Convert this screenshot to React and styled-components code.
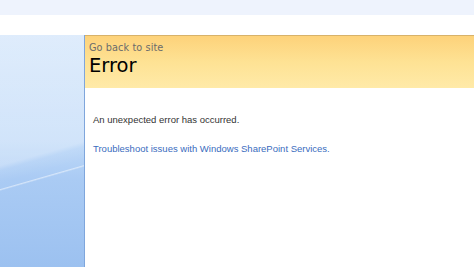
import styled, { createGlobalStyle } from 'styled-components';

const GlobalStyle = createGlobalStyle`
  html, body {
    margin: 0;
    padding: 0;
    background: #ffffff;
  }
  #root {
    min-height: 100vh;
    display: flex;
    flex-direction: column;
  }
`;

const App = () => {
  return (
    <>
      <GlobalStyle />
      <Page>
        <TopBar />
        <Gap />
        <Main>
          <Sidebar />
          <Content>
            <TitleArea>
              <BackLink href='#'>Go back to site</BackLink>
              <Title>Error</Title>
            </TitleArea>
            <Body>
              <Message>An unexpected error has occurred.</Message>
              <HelpLink href='#'>
                Troubleshoot issues with Windows SharePoint Services.
              </HelpLink>
            </Body>
          </Content>
        </Main>
      </Page>
    </>
  );
};

export default App;

const Page = styled.div`
  flex: 1;
  display: flex;
  flex-direction: column;
`;

const TopBar = styled.div`
  height: 15px;
  background: #eef3fd;
`;

const Gap = styled.div`
  height: 20px;
  background: #ffffff;
`;

const Main = styled.div`
  flex: 1;
  display: flex;
`;

// light swoosh across the blue quick launch column
const Sidebar = styled.div`
  width: 84px;
  flex-shrink: 0;
  border-right: 1px solid #7fa6dc;
  background:
    linear-gradient(164deg, transparent 0 60%, rgba(255, 255, 255, 0.5) 60.4%, transparent 61%),
    linear-gradient(164deg, rgba(255, 255, 255, 0.28) 0 51%, rgba(255, 255, 255, 0.08) 53%, transparent 58%),
    linear-gradient(180deg, #d2e5fb 0%, #c0daf8 45%, #aacbf4 62%, #9cc1f0 100%);
`;

const Content = styled.div`
  flex: 1;
  display: flex;
  flex-direction: column;
`;

const TitleArea = styled.div`
  height: 53px;
  padding: 6px 0 0 4px;
  box-sizing: border-box;
  border-top: 1px solid #d7b26a;
  background: linear-gradient(180deg, #fdd27a 0%, #fee294 50%, #ffeaa8 100%);
  display: flex;
  flex-direction: column;
`;

const BackLink = styled.a`
  font-family: 'DejaVu Sans', Verdana, sans-serif;
  font-size: 9.7px;
  letter-spacing: 0.1px;
  color: #6b6b6b;
  text-decoration: none;
  line-height: 12px;
`;

const Title = styled.h1`
  margin: 0;
  font-family: 'DejaVu Sans', Verdana, sans-serif;
  font-weight: normal;
  font-size: 19.5px;
  line-height: 24px;
  color: #000000;
`;

const Body = styled.div`
  padding: 26px 0 0 8px;
  display: flex;
  flex-direction: column;
  gap: 17px;
  font-family: 'Liberation Sans', Tahoma, sans-serif;
  font-size: 9.5px;
  line-height: 12px;
`;

const Message = styled.div`
  color: #333333;
`;

const HelpLink = styled.a`
  color: #3a6cbe;
  text-decoration: none;
`;
